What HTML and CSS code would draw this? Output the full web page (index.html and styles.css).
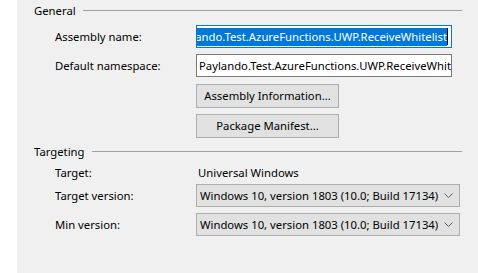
FILE: index.html
```html
<!DOCTYPE html>
<html>
<head>
<meta charset="utf-8">
<link rel="stylesheet" href="styles.css">
</head>
<body>
<div class="page">
  <div class="strip"></div>
  <div class="main">
    <div class="group-head"><span class="group-title">General</span><span class="group-line"></span></div>
    <div class="grid general">
      <div class="label">Assembly name:</div>
      <div class="textbox focused"><span class="sel">Paylando.Test.AzureFunctions.UWP.ReceiveWhitelist</span><span class="caret"></span></div>
      <div class="label">Default namespace:</div>
      <div class="textbox"><span>Paylando.Test.AzureFunctions.UWP.ReceiveWhitelist</span></div>
      <div></div>
      <div class="button">Assembly Information...</div>
      <div></div>
      <div class="button">Package Manifest...</div>
    </div>
    <div class="group-head targeting"><span class="group-title">Targeting</span><span class="group-line"></span></div>
    <div class="grid target">
      <div class="label">Target:</div>
      <div class="value">Universal Windows</div>
      <div class="label">Target version:</div>
      <div class="combo"><span>Windows 10, version 1803 (10.0; Build 17134)</span><svg class="chev" width="9" height="5" viewBox="0 0 9 5"><path d="M0.5 0.5 L4.5 4.5 L8.5 0.5" fill="none" stroke="#606060" stroke-width="1"/></svg></div>
      <div class="label">Min version:</div>
      <div class="combo"><span>Windows 10, version 1803 (10.0; Build 17134)</span><svg class="chev" width="9" height="5" viewBox="0 0 9 5"><path d="M0.5 0.5 L4.5 4.5 L8.5 0.5" fill="none" stroke="#606060" stroke-width="1"/></svg></div>
    </div>
  </div>
</div>
</body>
</html>
```
FILE: styles.css
```css
html, body {
  margin: 0;
  padding: 0;
  background: #f0f0f0;
}
body {
  font-family: "Noto Sans", "Liberation Sans", sans-serif;
  font-size: 11.3px;
  color: #000;
}
.page {
  display: flex;
  width: 478px;
  height: 273px;
  overflow: hidden;
}
.strip {
  width: 17px;
  background: #ffffff;
  flex: none;
}
.main {
  flex: 1;
  padding: 0 16px 0 17px;
}
.group-head {
  display: flex;
  align-items: center;
  height: 20px;
}
.group-title {
  white-space: nowrap;
  padding-right: 7px;
}
.group-line {
  flex: 1;
  height: 0;
  border-top: 1px solid #a0a0a0;
}
.targeting {
  margin-top: 4px;
}
.grid {
  display: grid;
  grid-template-columns: 141px 256px;
  padding-left: 21px;
  align-items: center;
}
.general {
  margin-top: 5px;
  grid-template-rows: 23px 23px 24px 24px;
  row-gap: 6px;
}
.general .button {
  margin-top: 1px;
}
.target {
  margin-top: 5px;
  grid-template-rows: 12px 23px 23px;
  row-gap: 6px;
  grid-template-columns: 141px 264px;
}
.label {
  white-space: nowrap;
}
.textbox {
  box-sizing: border-box;
  height: 23px;
  background: #fff;
  border: 1px solid #7a7a7a;
  display: flex;
  align-items: center;
  overflow: hidden;
  white-space: nowrap;
  padding: 0 2px;
}
.textbox.focused {
  border-color: #0078d7;
  justify-content: flex-end;
  padding-right: 3px;
}
.sel {
  background: #0078d7;
  color: #fff;
  line-height: 18px;
  flex: none;
}
.caret {
  width: 1px;
  height: 17px;
  background: #000;
  flex: none;
}
.button {
  box-sizing: border-box;
  width: 143px;
  height: 24px;
  background: #e1e1e1;
  border: 1px solid #adadad;
  display: flex;
  align-items: center;
  justify-content: center;
  white-space: nowrap;
}
.value {
  white-space: nowrap;
  padding-left: 2px;
}
.combo {
  box-sizing: border-box;
  height: 23px;
  background: #e1e1e1;
  border: 1px solid #adadad;
  display: flex;
  align-items: center;
  justify-content: space-between;
  padding: 0 6px 0 3px;
  white-space: nowrap;
}
.chev {
  flex: none;
}
```
